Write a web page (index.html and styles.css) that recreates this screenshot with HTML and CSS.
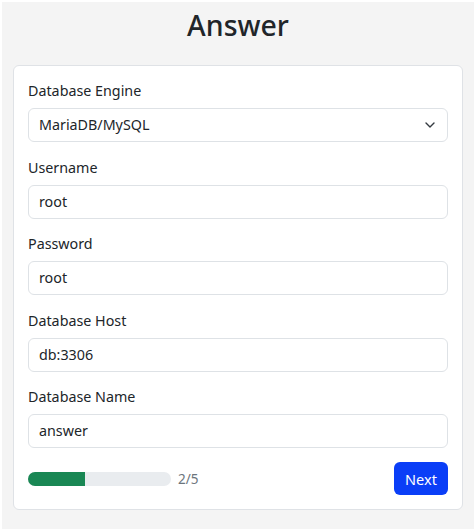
FILE: index.html
```html
<!DOCTYPE html>
<html lang="en">
<head>
<meta charset="utf-8">
<title>Answer</title>
<link rel="stylesheet" href="styles.css">
</head>
<body>
<div class="page">
  <h1 class="title">Answer</h1>
  <form class="card">
    <div class="group">
      <label class="label">Database Engine</label>
      <div class="select">
        <span>MariaDB/MySQL</span>
        <svg class="chev" width="10" height="6" viewBox="0 0 10 6"><path d="M1 1l4 4 4-4" fill="none" stroke="#343a40" stroke-width="1.4" stroke-linecap="round" stroke-linejoin="round"/></svg>
      </div>
    </div>
    <div class="group">
      <label class="label">Username</label>
      <div class="input">root</div>
    </div>
    <div class="group">
      <label class="label">Password</label>
      <div class="input">root</div>
    </div>
    <div class="group">
      <label class="label">Database Host</label>
      <div class="input">db:3306</div>
    </div>
    <div class="group last">
      <label class="label">Database Name</label>
      <div class="input">answer</div>
    </div>
    <div class="footer">
      <div class="progress-wrap">
        <div class="progress"><div class="bar" style="width:40%"></div></div>
        <span class="step">2/5</span>
      </div>
      <button type="button" class="btn">Next</button>
    </div>
  </form>
</div>
</body>
</html>
```

FILE: styles.css
```css
html, body {
  margin: 0;
  padding: 0;
  background: #ffffff;
}
body {
  font-family: "Noto Sans", "Open Sans", sans-serif;
  color: #212529;
}
.page {
  margin: 2px 0 0 2px;
  height: 527px;
  background: #f4f4f4;
  padding: 6px 11px 0 11px;
  box-sizing: border-box;
}
.title {
  margin: 0 0 23px 0;
  text-align: center;
  font-size: 28.5px;
  line-height: 34px;
  font-weight: 500;
  color: #212529;
}
.card {
  background: #ffffff;
  border: 1px solid #dfe2e6;
  border-radius: 6px;
  padding: 14px;
  height: 445px;
  box-sizing: border-box;
}
.group {
  margin-bottom: 14.5px;
}
.group.last {
  margin-bottom: 14px;
}
.label {
  display: block;
  font-size: 14.3px;
  line-height: 22px;
  margin-bottom: 6px;
}
.input, .select {
  height: 34px;
  box-sizing: border-box;
  border: 1px solid #dee2e6;
  border-radius: 6px;
  padding: 0 10px;
  font-size: 14.3px;
  line-height: 32px;
  color: #212529;
}
.select {
  display: flex;
  align-items: center;
  justify-content: space-between;
  padding-right: 12px;
}
.chev {
  display: block;
}
.footer {
  display: flex;
  align-items: center;
  justify-content: space-between;
}
.progress-wrap {
  display: flex;
  align-items: center;
  gap: 7px;
}
.progress {
  width: 143px;
  height: 14px;
  border-radius: 7px;
  background: #e9ecef;
  overflow: hidden;
}
.bar {
  height: 100%;
  background: #198754;
}
.step {
  font-size: 13.5px;
  color: #6c757d;
}
.btn {
  height: 33px;
  width: 54px;
  border: none;
  border-radius: 6px;
  background: #0a3ef7;
  color: #ffffff;
  font-family: inherit;
  font-size: 14.5px;
  padding: 0;
}
```
